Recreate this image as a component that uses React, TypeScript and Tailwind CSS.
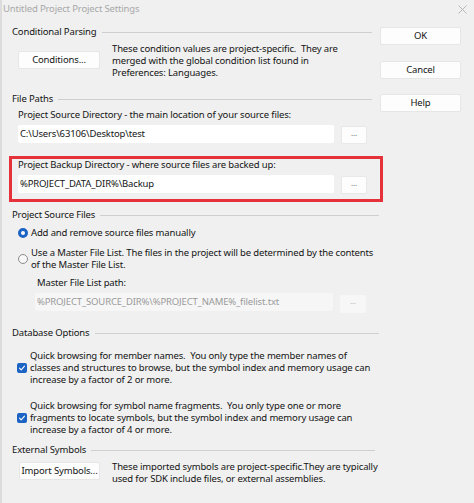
import React from "react";

const font = { fontFamily: '"Noto Sans", "Open Sans", sans-serif' };

function Btn({ children, className = "" }: { children: React.ReactNode; className?: string }) {
  return (
    <div
      className={
        "flex items-center justify-center bg-[#fdfdfd] border border-[#e6e6e6] rounded-[2px] text-[#141414] shrink-0 " +
        className
      }
    >
      {children}
    </div>
  );
}

function Header({ title, className = "", lineClass = "" }: { title: string; className?: string; lineClass?: string }) {
  return (
    <div className={"flex items-center h-[14px] leading-[14px] " + className}>
      <span className="whitespace-nowrap">{title}</span>
      <div className={"flex-1 h-px bg-[#cfcfcf] ml-[5px] " + lineClass} />
    </div>
  );
}

function Dots({ disabled = false, className = "" }: { disabled?: boolean; className?: string }) {
  return (
    <div
      className={
        "w-[26px] h-[18px] flex items-start justify-center leading-[12px] text-[8px] rounded-[2px] shrink-0 " +
        (disabled ? "bg-[#f7f7f7] text-[#b5b5b5] " : "bg-[#fdfdfd] border border-[#e8e8e8] text-[#6b6b6b] ") +
        className
      }
    >
      ...
    </div>
  );
}

function Check() {
  return (
    <div className="w-[10px] h-[10px] rounded-[2px] bg-[#1c64c4] flex items-center justify-center shrink-0">
      <svg width="8" height="8" viewBox="0 0 8 8">
        <path d="M1.5 4.2 L3.2 5.8 L6.5 2.2" stroke="white" strokeWidth="1.1" fill="none" strokeLinecap="round" strokeLinejoin="round" />
      </svg>
    </div>
  );
}

export default function App() {
  return (
    <div
      className="w-[474px] h-[503px] bg-[#f0f0f0] relative overflow-hidden text-[9.5px] tracking-[-0.15px] text-[#141414] border-l-[2px] border-[#dcdcdc]"
      style={font}
    >
      {/* title bar */}
      <div className="h-[19px] flex items-center pl-[1px] text-[9.5px] text-[#a8a8a8]">Untitled Project Project Settings</div>
      <div className="absolute left-[455px] top-[4px] w-[11px] h-[11px]">
        <svg width="11" height="11" viewBox="0 0 11 11">
          <path d="M1.5 1.5 L9.5 9.5 M9.5 1.5 L1.5 9.5" stroke="#b0b0b0" strokeWidth="0.9" />
        </svg>
      </div>

      <div className="flex">
        {/* left column */}
        <div className="w-[378px] pl-[10px] flex flex-col">
          <Header title="Conditional Parsing" className="mt-[6px]" lineClass="mr-[8px]" />
          <div className="flex items-start mt-[4px] pl-[6px]">
            <Btn className="w-[82px] h-[18px] mt-[8px]">Conditions...</Btn>
            <div className="ml-[12px] leading-[12px] whitespace-pre">
              {"These condition values are project-specific.  They are\nmerged with the global condition list found in\nPreferences: Languages."}
            </div>
          </div>

          <Header title="File Paths" className="mt-[13px]" lineClass="mr-[8px]" />
          <div className="pl-[6px] mt-[3px] leading-[12px]">Project Source Directory - the main location of your source files:</div>
          <div className="flex items-start pl-[6px] mt-[4px]">
            <div className="w-[316px] h-[18px] bg-white rounded-[2px] leading-[18px] pl-[2px]">C:\Users\63106\Desktop\test</div>
            <Dots className="ml-[7px] mt-[1px]" />
          </div>

          <div className="-ml-[3px] w-[374px] mt-[12px] border-[3px] border-[#e5323a] pl-[6px] pb-[5px] flex flex-col">
            <div className="leading-[12px]">Project Backup Directory - where source files are backed up:</div>
            <div className="flex items-start mt-[4px]">
              <div className="w-[316px] h-[18px] bg-white rounded-[2px] leading-[18px] pl-[2px]">%PROJECT_DATA_DIR%\Backup</div>
              <Dots className="ml-[7px] mt-[1px]" />
            </div>
          </div>

          <Header title="Project Source Files" className="mt-[6px]" lineClass="mr-[1px]" />
          <div className="flex items-center pl-[6px] mt-[5px] leading-[12px]">
            <div className="w-[10px] h-[10px] rounded-full border-[3px] border-[#1c64c4] bg-white shrink-0" />
            <span className="ml-[3px]">Add and remove source files manually</span>
          </div>
          <div className="flex items-center pl-[6px] mt-[8px] leading-[12px]">
            <div className="w-[10px] h-[10px] rounded-full border border-[#8c8c8c] bg-[#f7f7f7] shrink-0" />
            <span className="ml-[3px] whitespace-pre">
              {"Use a Master File List. The files in the project will be determined by the contents\nof the Master File List."}
            </span>
          </div>
          <div className="pl-[25px] mt-[6px] leading-[12px]">Master File List path:</div>
          <div className="flex items-start pl-[23px] mt-[4px]">
            <div className="w-[298px] h-[18px] bg-[#f6f6f6] rounded-[2px] leading-[18px] pl-[2px] text-[#9a9a9a]">
              %PROJECT_SOURCE_DIR%\%PROJECT_NAME%_filelist.txt
            </div>
            <Dots disabled className="ml-[7px] mt-[2px]" />
          </div>

          <Header title="Database Options" className="mt-[13px]" lineClass="mr-[1px]" />
          <div className="flex items-center pl-[5px] mt-[10px] leading-[12px]">
            <Check />
            <span className="ml-[3px] whitespace-pre">
              {"Quick browsing for member names.  You only type the member names of\nclasses and structures to browse, but the symbol index and memory usage can\nincrease by a factor of 2 or more."}
            </span>
          </div>
          <div className="flex items-center pl-[5px] mt-[14px] leading-[12px]">
            <Check />
            <span className="ml-[3px] whitespace-pre">
              {"Quick browsing for symbol name fragments.  You only type one or more\nfragments to locate symbols, but the symbol index and memory usage can\nincrease by a factor of 4 or more."}
            </span>
          </div>

          <Header title="External Symbols" className="mt-[7px]" lineClass="mr-[5px]" />
          <div className="flex items-start mt-[4px] pl-[7px]">
            <Btn className="w-[81px] h-[18px] mt-[1px]">Import Symbols...</Btn>
            <div className="ml-[12px] leading-[12px] whitespace-pre">
              {"These imported symbols are project-specific.They are typically\nused for SDK include files, or external assemblies."}
            </div>
          </div>
        </div>

        {/* right column */}
        <div className="w-[81px] flex flex-col mt-[8px]">
          <Btn className="h-[18px]">OK</Btn>
          <Btn className="h-[18px] mt-[16px]">Cancel</Btn>
          <Btn className="h-[18px] mt-[15px]">Help</Btn>
        </div>
      </div>
    </div>
  );
}
